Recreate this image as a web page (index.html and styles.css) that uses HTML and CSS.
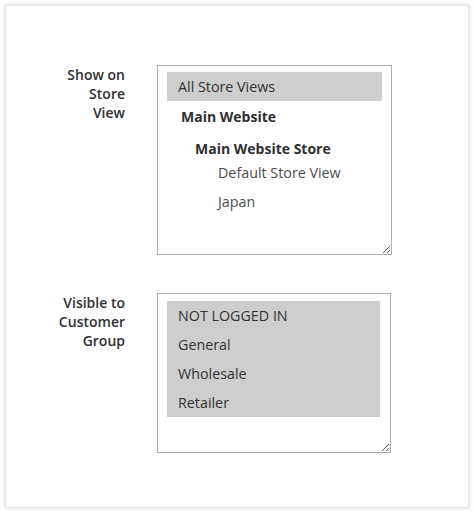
FILE: index.html
```html
<!DOCTYPE html>
<html lang="en">
<head>
<meta charset="utf-8">
<title>Store View and Customer Group</title>
<link rel="stylesheet" href="styles.css">
</head>
<body>
<div class="card">
  <div class="form">
    <div class="field">
      <label class="label">Show on<br>Store<br>View</label>
      <div class="listbox listbox-store" role="listbox" aria-multiselectable="true">
        <div class="opt selected">All Store Views</div>
        <div class="group group-website">Main Website</div>
        <div class="group group-store">Main Website Store</div>
        <div class="opt sub">Default Store View</div>
        <div class="opt sub">Japan</div>
      </div>
    </div>
    <div class="field field-group">
      <label class="label">Visible to<br>Customer<br>Group</label>
      <div class="listbox listbox-group" role="listbox" aria-multiselectable="true">
        <div class="selected-block">
          <div class="opt">NOT LOGGED IN</div>
          <div class="opt">General</div>
          <div class="opt">Wholesale</div>
          <div class="opt">Retailer</div>
        </div>
      </div>
    </div>
  </div>
</div>
</body>
</html>
```

FILE: styles.css
```css
html, body {
  margin: 0;
  padding: 0;
  background: #ffffff;
}

body {
  font-family: "Open Sans", "Liberation Sans", sans-serif;
  font-size: 14px;
  color: #303030;
}

.card {
  margin: 5px;
  height: 501px;
  border: 1px solid #e6e6e6;
  box-shadow: 0 0 3px 1px rgba(0, 0, 0, 0.10);
  background: #ffffff;
}

.form {
  padding-top: 59px;
  display: flex;
  flex-direction: column;
  gap: 38px;
}

.field {
  display: grid;
  grid-template-columns: 119px 235px;
  column-gap: 32px;
  align-items: start;
}

.field-group {
  grid-template-columns: 119px 234px;
}

.label {
  text-align: right;
  font-weight: 600;
  color: #303030;
  line-height: 19px;
}

.listbox {
  box-sizing: border-box;
  border: 1px solid #adadad;
  padding: 6px 9px 0 9px;
  resize: vertical;
  overflow: auto;
  background: #fff;
}

.listbox-store {
  height: 190px;
}

.listbox-group {
  height: 160px;
  padding-top: 7px;
  padding-right: 10px;
}

.opt {
  height: 29px;
  line-height: 19px;
  font-size: 14.3px;
  padding: 5px 0 5px 11px;
  box-sizing: border-box;
  color: #333;
  white-space: nowrap;
}

.selected,
.selected-block {
  background: #cecece;
}

.group {
  font-weight: 700;
  color: #303030;
  line-height: 19px;
  white-space: nowrap;
  box-sizing: border-box;
}

.group-website {
  height: 31px;
  padding: 6px 0 6px 14px;
}

.group-store {
  height: 26px;
  padding: 7px 0 0 28px;
}

.opt.sub {
  padding-left: 51px;
  color: #4d4d4d;
}
```
